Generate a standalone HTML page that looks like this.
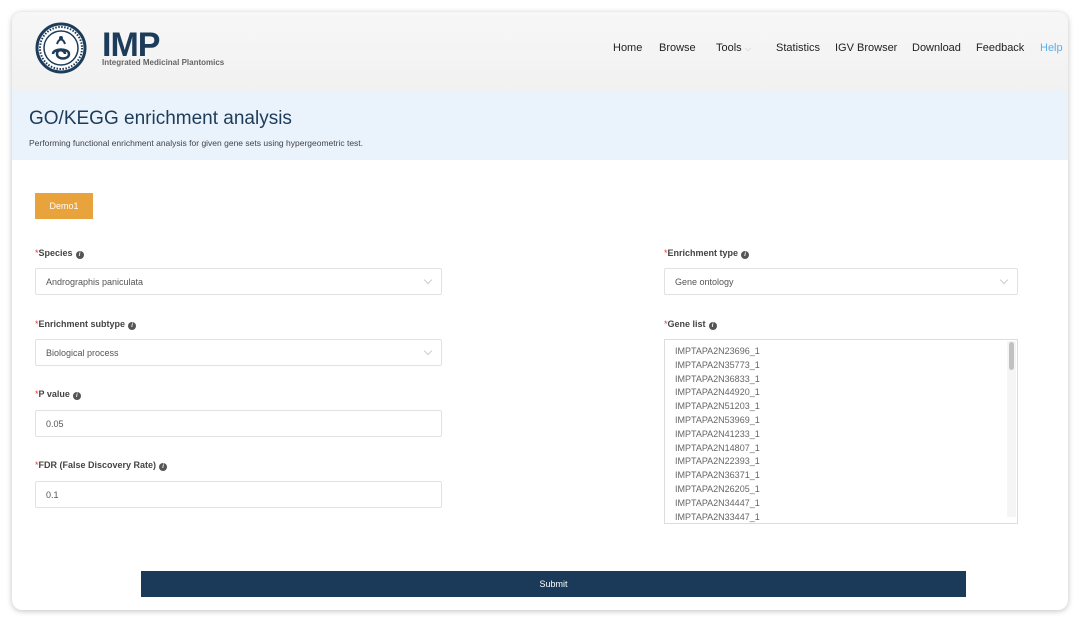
<!DOCTYPE html>
<html><head><meta charset="utf-8"><style>
*{box-sizing:border-box;margin:0;padding:0}
body{width:1080px;height:622px;background:#fff;font-family:"Liberation Sans",sans-serif;position:relative;overflow:hidden}
.card{position:absolute;left:12px;top:12px;width:1056px;height:598px;border-radius:10px;background:#fff;box-shadow:0 1px 6px rgba(0,0,0,.25);overflow:hidden}
.hdr{position:absolute;left:0;top:0;width:1056px;height:80px;background:linear-gradient(#f7f7f7,#f1f1f1)}
.nav{position:absolute;top:30px;font-size:11px;color:#222}
.band{position:absolute;left:0;top:80px;width:1056px;height:68px;background:#eaf2fc}
.abs{position:absolute}
.lbl{position:absolute;font-size:9px;font-weight:bold;color:#444}
.lbl b{color:#e33;font-weight:normal}
.info{display:inline-block;width:8px;height:8px;border-radius:50%;background:#555;color:#fff;font-size:6px;text-align:center;line-height:8px;vertical-align:0;margin-left:3px;font-style:italic}
.inp{position:absolute;height:27px;border:1px solid #e2e2e2;border-radius:2px;font-size:9px;color:#555;padding:0 10px;line-height:26px;background:#fff}
.chev{position:absolute;right:10px;top:8px;width:6px;height:6px;border-right:1px solid #ccc;border-bottom:1px solid #ccc;transform:rotate(45deg)}
.ta{position:absolute;left:652px;top:327px;width:354px;height:185px;border:1px solid #ddd;font-size:9px;color:#666;padding:5px 10px;line-height:13.8px}
</style></head><body>
<div class="card">
<div class="hdr">
<svg class="abs" style="left:23px;top:10px" width="52" height="52" viewBox="0 0 52 52"><circle cx="26" cy="26" r="24" fill="#fff" stroke="#1d3c5a" stroke-width="3"/><circle cx="26" cy="26" r="17" fill="none" stroke="#1d3c5a" stroke-width="1.5"/><circle cx="26" cy="26" r="21" fill="none" stroke="#1d3c5a" stroke-width="2" stroke-dasharray="1.5 1.5"/><path d="M18 32c0-6 16-6 16 0s-12 6-12 0 8-4 8 0" fill="none" stroke="#1d3c5a" stroke-width="2.5"/><path d="M22 22c2-6 6-6 8 0" fill="none" stroke="#1d3c5a" stroke-width="2"/><circle cx="26" cy="16" r="2" fill="#1d3c5a"/></svg>
<div class="abs" style="left:90px;top:14px;font-size:34px;font-weight:bold;color:#1d3c5a;letter-spacing:-1px">IMP</div>
<div class="abs" style="left:90px;top:46px;font-size:8px;font-weight:bold;color:#666">Integrated Medicinal Plantomics</div>
<div class="nav" style="left:601px">Home</div>
<div class="nav" style="left:647px">Browse</div>
<div class="nav" style="left:704px">Tools <span style="color:#bbb;font-size:8px">⌵</span></div>
<div class="nav" style="left:764px">Statistics</div>
<div class="nav" style="left:823px">IGV Browser</div>
<div class="nav" style="left:900px">Download</div>
<div class="nav" style="left:964px">Feedback</div>
<div class="nav" style="left:1028px;color:#5aaeef">Help</div>
</div>
<div class="band">
<div class="abs" style="left:17px;top:16px;font-size:19px;color:#1d3c5a">GO/KEGG enrichment analysis</div>
<div class="abs" style="left:17px;top:46px;font-size:8.5px;color:#444">Performing functional enrichment analysis for given gene sets using hypergeometric test.</div>
</div>
<div class="abs" style="left:23px;top:181px;width:58px;height:26px;background:#e8a33d;color:#fff;font-size:9px;text-align:center;line-height:26px">Demo1</div>
<div class="lbl" style="left:23px;top:236px"><b>*</b>Species<span class="info">i</span></div>
<div class="inp" style="left:23px;top:256px;width:407px">Andrographis paniculata<span class="chev"></span></div>
<div class="lbl" style="left:23px;top:307px"><b>*</b>Enrichment subtype<span class="info">i</span></div>
<div class="inp" style="left:23px;top:327px;width:407px">Biological process<span class="chev"></span></div>
<div class="lbl" style="left:23px;top:377px"><b>*</b>P value<span class="info">i</span></div>
<div class="inp" style="left:23px;top:398px;width:407px">0.05</div>
<div class="lbl" style="left:23px;top:448px"><b>*</b>FDR (False Discovery Rate)<span class="info">i</span></div>
<div class="inp" style="left:23px;top:469px;width:407px">0.1</div>
<div class="lbl" style="left:652px;top:236px"><b>*</b>Enrichment type<span class="info">i</span></div>
<div class="inp" style="left:652px;top:256px;width:354px">Gene ontology<span class="chev"></span></div>
<div class="lbl" style="left:652px;top:307px"><b>*</b>Gene list<span class="info">i</span></div>
<div class="ta">IMPTAPA2N23696_1<br>IMPTAPA2N35773_1<br>IMPTAPA2N36833_1<br>IMPTAPA2N44920_1<br>IMPTAPA2N51203_1<br>IMPTAPA2N53969_1<br>IMPTAPA2N41233_1<br>IMPTAPA2N14807_1<br>IMPTAPA2N22393_1<br>IMPTAPA2N36371_1<br>IMPTAPA2N26205_1<br>IMPTAPA2N34447_1<br>IMPTAPA2N33447_1
<div class="abs" style="right:1px;top:1px;width:9px;height:176px;background:#f5f5f5"><div style="margin:1px auto;width:5px;height:28px;background:#c1c1c1;border-radius:3px"></div></div></div>
<div class="abs" style="left:129px;top:559px;width:825px;height:26px;background:#1b3a5a;color:#fff;font-size:9px;text-align:center;line-height:26px">Submit</div>
</div>
</body></html>
